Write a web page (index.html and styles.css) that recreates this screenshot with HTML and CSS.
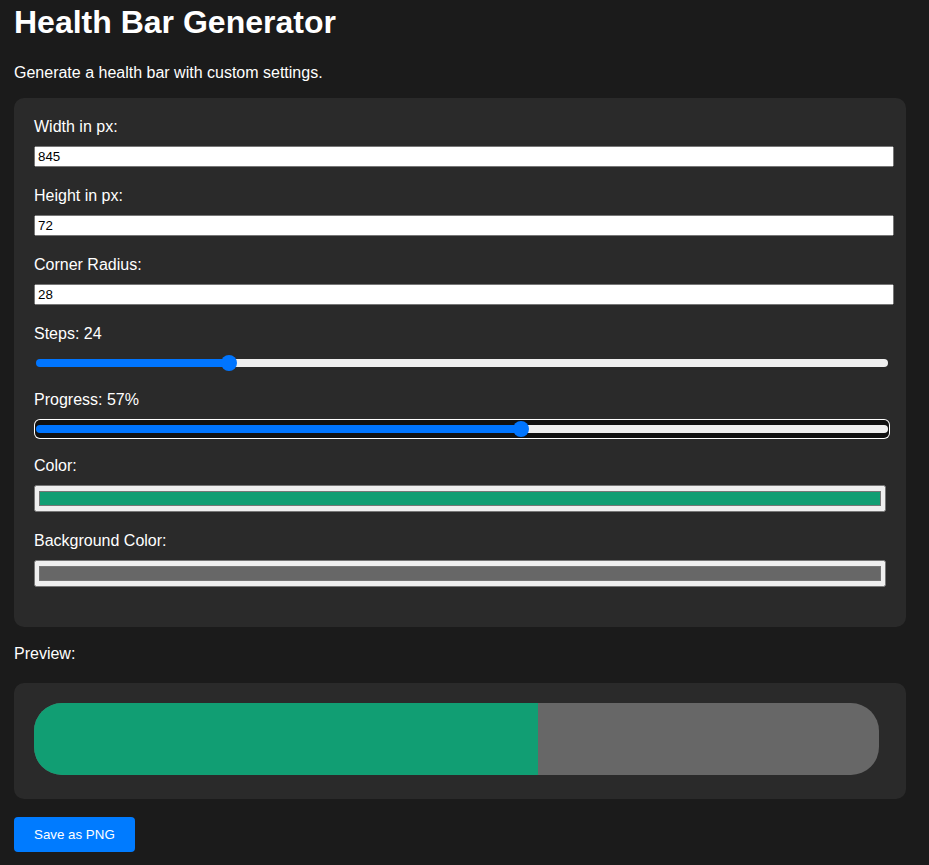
FILE: index.html
```html
<!DOCTYPE html>
<html lang="en">
<head>
<meta charset="utf-8">
<title>Health Bar Generator</title>
<link rel="stylesheet" href="styles.css">
</head>
<body>
<div class="page">
  <h1 class="title">Health Bar Generator</h1>
  <p class="intro">Generate a health bar with custom settings.</p>

  <div class="panel">
    <label class="field-label" for="w">Width in px:</label>
    <input class="field text-field" id="w" type="number" value="845">

    <label class="field-label" for="h">Height in px:</label>
    <input class="field text-field" id="h" type="number" value="72">

    <label class="field-label" for="r">Corner Radius:</label>
    <input class="field text-field" id="r" type="number" value="28">

    <label class="field-label" for="s">Steps: 24</label>
    <input class="field range-field" id="s" type="range" min="1" max="105" value="24" style="--fill: 22.6%">

    <label class="field-label" for="p">Progress: 57%</label>
    <input class="field range-field range-focused" id="p" type="range" min="0" max="100" value="57" style="--fill: 56.9%">

    <label class="field-label" for="c">Color:</label>
    <input class="field color-field" id="c" type="color" value="#119e73">

    <label class="field-label" for="b">Background Color:</label>
    <input class="field color-field" id="b" type="color" value="#676767">
  </div>

  <div class="preview-label">Preview:</div>
  <div class="preview">
    <div class="bar">
      <div class="bar-fill" style="width: 504px"></div>
    </div>
  </div>

  <button class="save-btn" type="button">Save as PNG</button>
</div>
</body>
</html>
```
FILE: styles.css
```css
html {
  color-scheme: light;
}

body {
  margin: 0;
  background: #1b1b1b;
  color: #ffffff;
  font-family: "Liberation Sans", Arial, sans-serif;
  font-size: 16px;
}

.page {
  width: 892px;
  margin-left: 14px;
  padding-top: 4px;
}

.title {
  margin: 0 0 22.5px;
  font-size: 32px;
  font-weight: bold;
  line-height: normal;
}

.intro {
  margin: 0 0 16px;
  line-height: normal;
}

.panel {
  display: flex;
  flex-direction: column;
  align-items: flex-start;
  background: #2a2a2a;
  border-radius: 10px;
  padding: 20px;
  margin-bottom: 18px;
}

.field-label {
  display: block;
  margin-bottom: 10px;
  line-height: normal;
}

.field {
  display: block;
  font-family: "Liberation Sans", Arial, sans-serif;
  font-size: 13.333px;
}

.text-field {
  width: 852px;
  margin: 0 0 20px;
}

.range-field {
  -webkit-appearance: none;
  appearance: none;
  box-sizing: border-box;
  width: 852px;
  height: 16px;
  margin: 2px 2px 20px;
  padding: 0;
  background: transparent;
  border: none;
  border-radius: 4px;
  outline: none;
}

.range-field::-webkit-slider-runnable-track {
  height: 8px;
  border-radius: 4px;
  background: linear-gradient(to right, #0075ff 0, #0075ff var(--fill), #efefef var(--fill), #efefef 100%);
}

.range-field::-webkit-slider-thumb {
  -webkit-appearance: none;
  appearance: none;
  width: 16px;
  height: 16px;
  margin-top: -4px;
  border: none;
  border-radius: 50%;
  background: #0075ff;
}

.range-focused {
  background: #111111;
  box-shadow: 0 0 0 1px #111111, 0 0 0 2px #ffffff;
}

.color-field {
  width: 852px;
  margin: 0 0 20px;
}

.preview-label {
  margin-bottom: 20px;
  line-height: normal;
}

.preview {
  background: #2a2a2a;
  border-radius: 10px;
  padding: 20px 20px 24px;
  margin-bottom: 18px;
}

.bar {
  width: 845px;
  height: 72px;
  border-radius: 28px;
  overflow: hidden;
  background: #676767;
}

.bar-fill {
  height: 100%;
  background: #119e73;
}

.save-btn {
  display: block;
  background: #007bff;
  color: #ffffff;
  border: none;
  border-radius: 4px;
  padding: 10px 20px;
  font-family: "Liberation Sans", Arial, sans-serif;
  font-size: 13.333px;
  line-height: normal;
}
```
